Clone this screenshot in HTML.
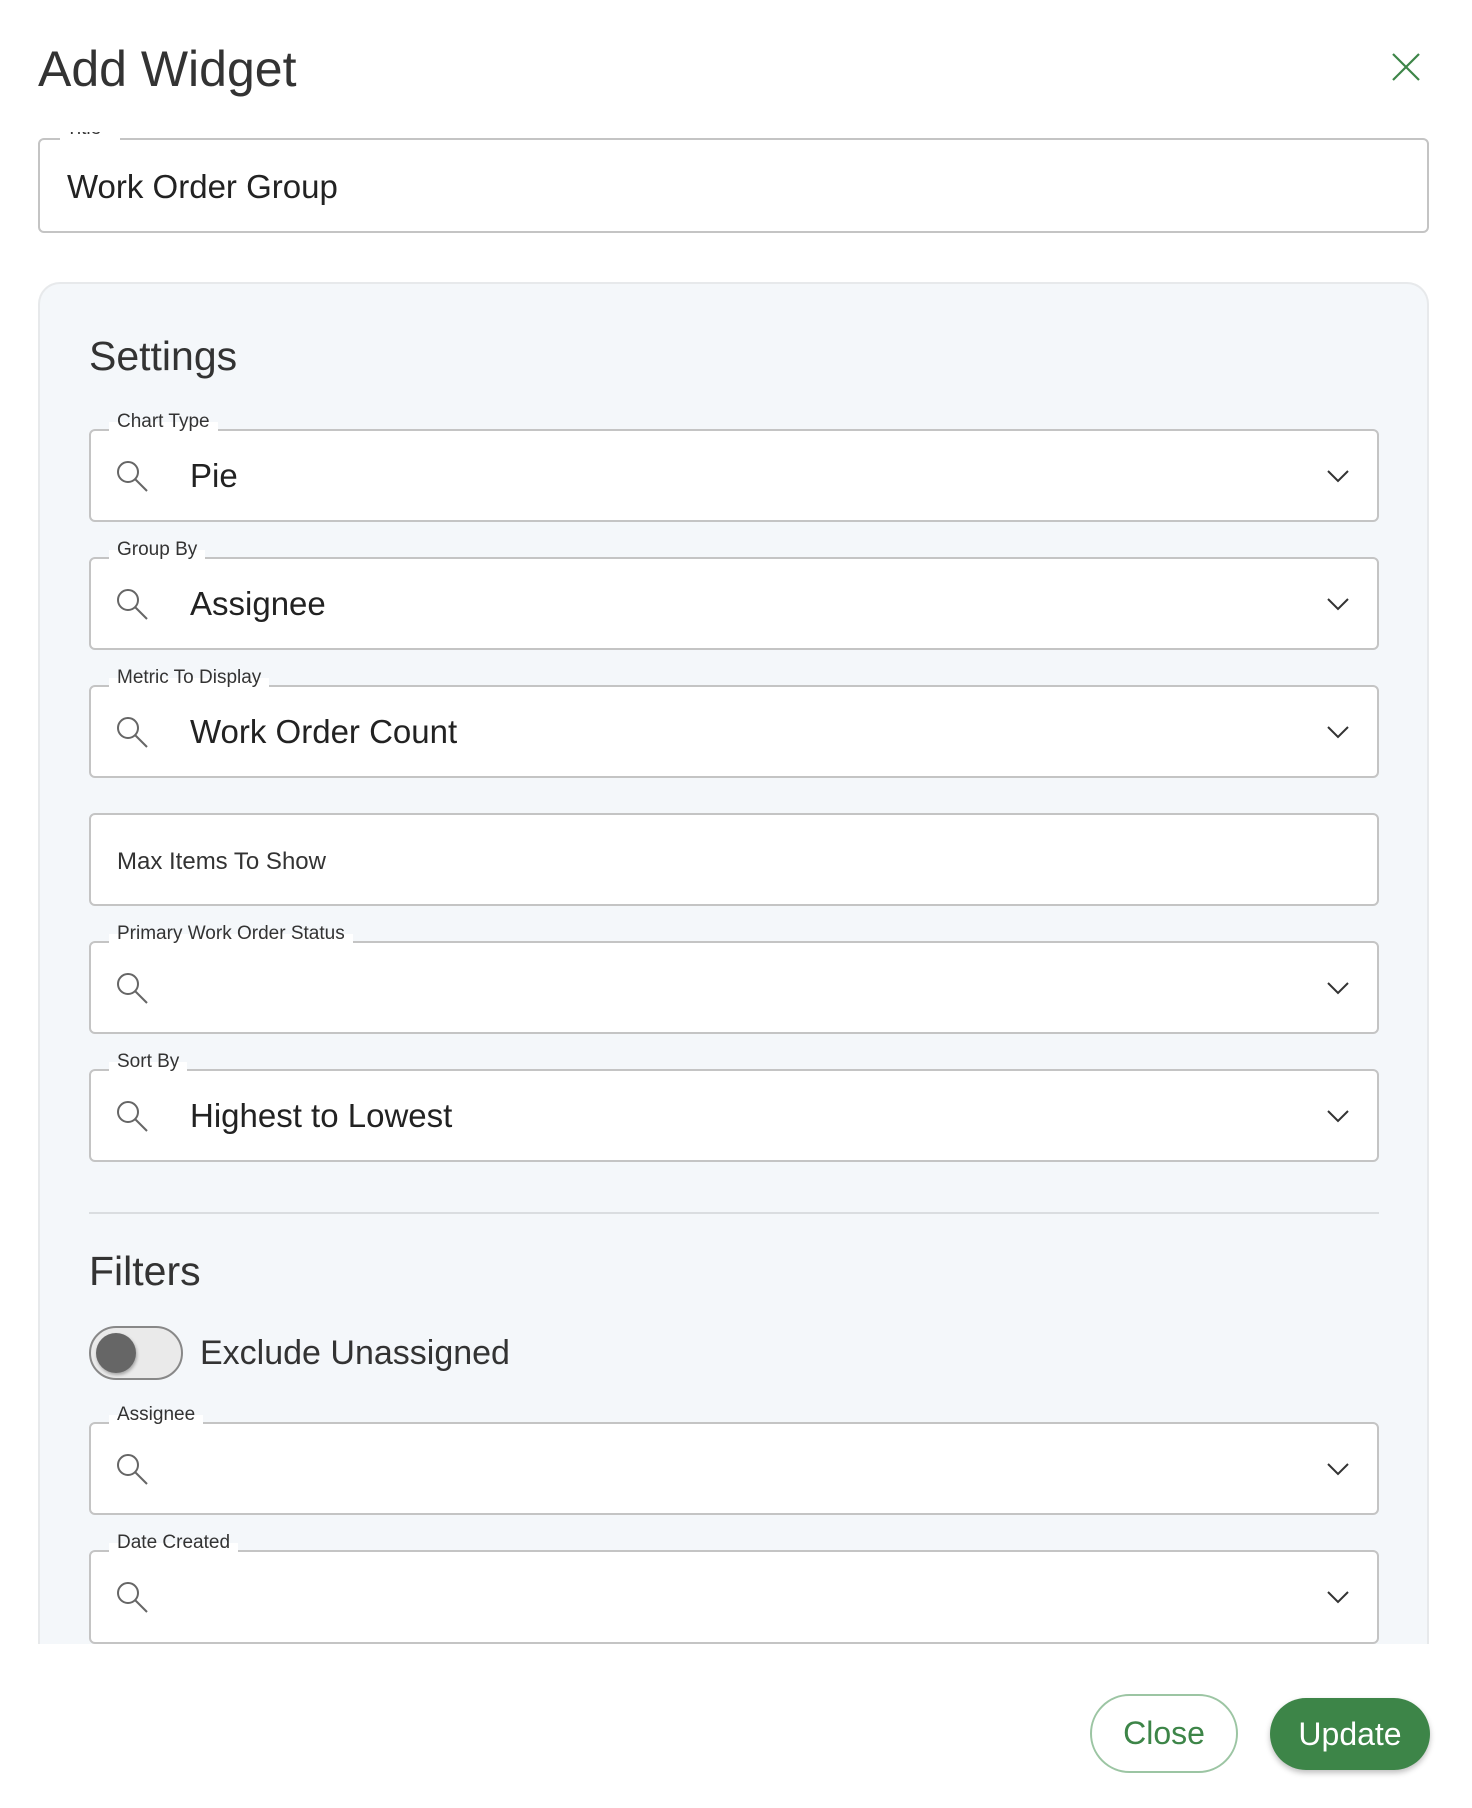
<!DOCTYPE html>
<html><head><meta charset="utf-8"><style>
*{box-sizing:border-box;margin:0;padding:0}
body{width:1472px;height:1808px;background:#fff;font-family:"Liberation Sans",sans-serif;color:#333;position:relative;overflow:hidden}
.abs{position:absolute}
h1{position:absolute;left:38px;top:40px;font-size:50px;font-weight:400;color:#333}
.x{position:absolute;left:1391px;top:52px}
.title{position:absolute;left:38px;top:138px;width:1391px;height:95px;border:2px solid #c4c4c4;border-radius:6px;background:#fff}
.title span{position:absolute;left:27px;top:28px;font-size:33px;color:#222}
.panel{position:absolute;left:38px;top:282px;width:1391px;height:1362px;background:#f4f7fa;border:2px solid #e7e9eb;border-bottom:none;border-radius:22px 22px 0 0}
.field{position:absolute;left:89px;width:1290px;height:93px;border:2px solid #c4c4c4;border-radius:6px;background:#fff}
.lbl{position:absolute;left:18px;top:-20px;padding:0 8px;font-size:19px;color:#333;background:linear-gradient(#f4f7fa 50%,#fff 50%)}
.srch{position:absolute;left:24px;top:28px}
.val{position:absolute;left:99px;top:26px;font-size:33px;color:#222}
.chev{position:absolute;right:28px;top:38px}
h2{position:absolute;left:89px;font-size:41px;font-weight:400;color:#333}
</style></head><body>
<h1>Add Widget</h1>
<svg class="x" width="30" height="30" viewBox="0 0 30 30"><path d="M2 2L28 28M28 2L2 28" stroke="#3d8548" stroke-width="2.2" fill="none"/></svg>
<div class="title"><div style="position:absolute;left:20px;top:-4px;width:60px;height:8px;background:#fff"></div><span>Work Order Group</span></div>
<div class="abs" style="left:66px;top:120px;font-size:19px;color:#333;height:13px;overflow:hidden;line-height:16px"><div style="margin-top:-2px">Title</div></div>
<div class="abs" style="left:60px;top:112px;width:70px;height:20px;background:#fff"></div>
<div class="abs" style="left:66px;top:132px;width:40px;height:4px;overflow:hidden"><div style="font-size:19px;margin-top:-14px;color:#333">Title</div></div>
<div class="panel"></div>
<h2 style="top:333px">Settings</h2>

<div class="field" style="top:429px"><div class="lbl">Chart Type</div><svg class="srch" width="36" height="36" viewBox="0 0 36 36"><circle cx="13" cy="13" r="10" stroke="#666" stroke-width="2" fill="none"/><path d="M20 20L32 32" stroke="#666" stroke-width="2"/></svg><div class="val">Pie</div><svg class="chev" width="22" height="14" viewBox="0 0 22 14"><path d="M1 2L11 12L21 2" stroke="#333" stroke-width="2" fill="none"/></svg></div>

<div class="field" style="top:557px"><div class="lbl">Group By</div><svg class="srch" width="36" height="36" viewBox="0 0 36 36"><circle cx="13" cy="13" r="10" stroke="#666" stroke-width="2" fill="none"/><path d="M20 20L32 32" stroke="#666" stroke-width="2"/></svg><div class="val">Assignee</div><svg class="chev" width="22" height="14" viewBox="0 0 22 14"><path d="M1 2L11 12L21 2" stroke="#333" stroke-width="2" fill="none"/></svg></div>

<div class="field" style="top:685px"><div class="lbl">Metric To Display</div><svg class="srch" width="36" height="36" viewBox="0 0 36 36"><circle cx="13" cy="13" r="10" stroke="#666" stroke-width="2" fill="none"/><path d="M20 20L32 32" stroke="#666" stroke-width="2"/></svg><div class="val">Work Order Count</div><svg class="chev" width="22" height="14" viewBox="0 0 22 14"><path d="M1 2L11 12L21 2" stroke="#333" stroke-width="2" fill="none"/></svg></div>

<div class="field" style="top:813px"><div style="position:absolute;left:26px;top:33px;font-size:24px;color:#333">Max Items To Show</div></div>

<div class="field" style="top:941px"><div class="lbl">Primary Work Order Status</div><svg class="srch" width="36" height="36" viewBox="0 0 36 36"><circle cx="13" cy="13" r="10" stroke="#666" stroke-width="2" fill="none"/><path d="M20 20L32 32" stroke="#666" stroke-width="2"/></svg><svg class="chev" width="22" height="14" viewBox="0 0 22 14"><path d="M1 2L11 12L21 2" stroke="#333" stroke-width="2" fill="none"/></svg></div>

<div class="field" style="top:1069px"><div class="lbl">Sort By</div><svg class="srch" width="36" height="36" viewBox="0 0 36 36"><circle cx="13" cy="13" r="10" stroke="#666" stroke-width="2" fill="none"/><path d="M20 20L32 32" stroke="#666" stroke-width="2"/></svg><div class="val">Highest to Lowest</div><svg class="chev" width="22" height="14" viewBox="0 0 22 14"><path d="M1 2L11 12L21 2" stroke="#333" stroke-width="2" fill="none"/></svg></div>

<div class="abs" style="left:89px;top:1212px;width:1290px;height:2px;background:#dadde0"></div>
<h2 style="top:1248px">Filters</h2>
<div class="abs" style="left:89px;top:1326px;width:94px;height:54px;border:2px solid #888;border-radius:27px;background:#eaeaea"></div>
<div class="abs" style="left:96px;top:1333px;width:40px;height:40px;border-radius:50%;background:#666;box-shadow:1px 2px 3px rgba(0,0,0,.3)"></div>
<div class="abs" style="left:200px;top:1334px;font-size:34px;color:#333">Exclude Unassigned</div>

<div class="field" style="top:1422px"><div class="lbl">Assignee</div><svg class="srch" width="36" height="36" viewBox="0 0 36 36"><circle cx="13" cy="13" r="10" stroke="#666" stroke-width="2" fill="none"/><path d="M20 20L32 32" stroke="#666" stroke-width="2"/></svg><svg class="chev" width="22" height="14" viewBox="0 0 22 14"><path d="M1 2L11 12L21 2" stroke="#333" stroke-width="2" fill="none"/></svg></div>

<div class="field" style="top:1550px;height:94px"><div class="lbl">Date Created</div><svg class="srch" width="36" height="36" viewBox="0 0 36 36"><circle cx="13" cy="13" r="10" stroke="#666" stroke-width="2" fill="none"/><path d="M20 20L32 32" stroke="#666" stroke-width="2"/></svg><svg class="chev" width="22" height="14" viewBox="0 0 22 14"><path d="M1 2L11 12L21 2" stroke="#333" stroke-width="2" fill="none"/></svg></div>

<div class="abs" style="left:1090px;top:1694px;width:148px;height:79px;border:2px solid #9cc5a3;border-radius:40px;color:#3d8548;font-size:32px;text-align:center;line-height:75px">Close</div>
<div class="abs" style="left:1270px;top:1698px;width:160px;height:72px;background:#3d8548;border-radius:36px;color:#fff;font-size:32px;text-align:center;line-height:72px;box-shadow:0 3px 6px rgba(0,0,0,.25)">Update</div>
</body></html>
